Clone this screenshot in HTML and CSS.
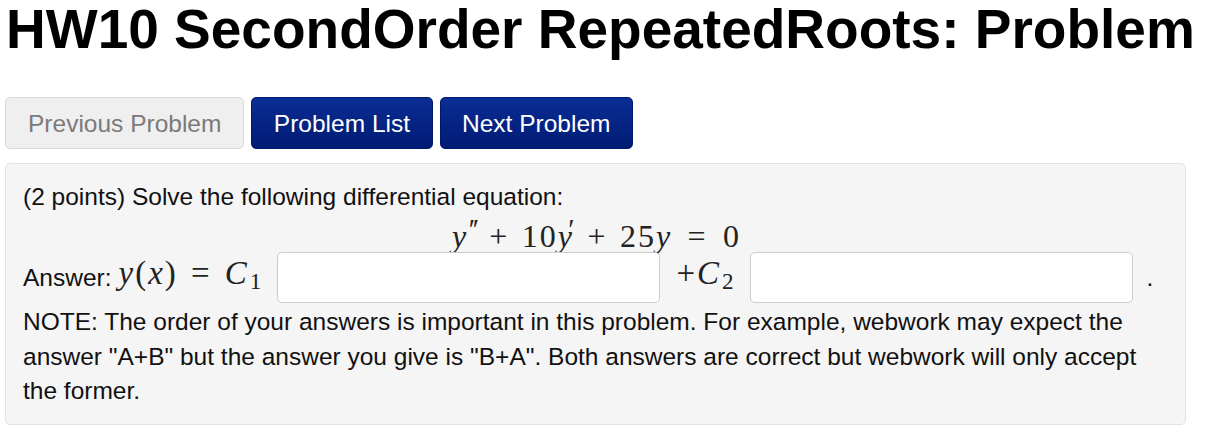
FILE: index.html
```html
<!DOCTYPE html>
<html>
<head>
<meta charset="utf-8">
<link rel="stylesheet" href="styles.css">
</head>
<body>
<div class="page">
  <h1 class="title">HW10 SecondOrder RepeatedRoots: Problem</h1>
  <div class="nav">
    <span class="btn btn-disabled">Previous Problem</span>
    <a class="btn btn-primary">Problem List</a>
    <a class="btn btn-primary">Next Problem</a>
  </div>
  <div class="well">
    <div class="line">(2 points) Solve the following differential equation:</div>
    <div class="eq math"><span class="mi">y</span><span class="pr pr2">′′</span><span class="mo">+</span><span class="mn">10</span><span class="mi">y</span><span class="pr pr1">′</span><span class="mo">+</span><span class="mn">25</span><span class="mi">y</span><span class="mo mo-eq">=</span><span class="mn">0</span></div>
    <div class="answer-row">
      <span class="label">Answer:</span>
      <span class="math ans-math"><span class="mi">y</span><span class="mn">(</span><span class="mi">x</span><span class="mn">)</span><span class="mo mo-eq">=</span><span class="mi">C</span><span class="sub">1</span></span>
      <span class="input"></span>
      <span class="math ans-math2"><span class="mn">+</span><span class="mi">C</span><span class="sub">2</span></span>
      <span class="input"></span>
      <span class="dot">.</span>
    </div>
    <div class="note">NOTE: The order of your answers is important in this problem. For example, webwork may expect the answer "A+B" but the answer you give is "B+A". Both answers are correct but webwork will only accept the former.</div>
  </div>
</div>
</body>
</html>
```

FILE: styles.css
```css
html, body {
  margin: 0;
  padding: 0;
  background: #ffffff;
}

.page {
  padding: 0 20px 0 5px;
  font-family: "Liberation Sans", Arial, sans-serif;
  font-size: 24.5px;
  line-height: 35px;
  color: #111111;
}

.title {
  margin: 0;
  font-size: 55px;
  line-height: 56px;
  font-weight: bold;
  color: #000000;
  padding-left: 1px;
  padding-top: 1px;
  white-space: nowrap;
}

.nav {
  display: flex;
  gap: 7px;
  margin-top: 40px;
}

.btn {
  display: inline-block;
  height: 35px;
  padding: 7.5px 21.5px;
  border: 1px solid transparent;
  border-radius: 5px;
  line-height: 35px;
  white-space: nowrap;
}

.btn-disabled {
  background: #efefef;
  border-color: #d9d9d9;
  color: #7a7a7a;
  padding: 7.5px 22px;
}

.btn-primary {
  background: linear-gradient(to bottom, #0a2e94, #001b74);
  border-color: #00196a;
  color: #ffffff;
}

.well {
  margin-top: 14px;
  background: #f5f5f5;
  border: 1px solid #e3e3e3;
  border-radius: 5px;
  padding: 15px 17px 15px 17px;
}

.line {
  height: 35px;
}

.math {
  font-family: "Liberation Serif", "Times New Roman", serif;
  color: #222222;
  letter-spacing: 2px;
  white-space: nowrap;
}

.eq {
  text-align: center;
  font-size: 32px;
  height: 36px;
  line-height: 30px;
  padding-left: 2px;
}

.mi {
  font-style: italic;
}

.mo {
  margin: 0 0.39em;
}

.mo-eq {
  margin: 0 0.48em;
}

.pr {
  display: inline-block;
  font-size: 0.9em;
  vertical-align: 0.28em;
  letter-spacing: -0.08em;
}

.pr2 {
  margin-left: 0.02em;
}

.pr1 {
  margin-left: -0.2em;
  margin-right: 0.1em;
}

.answer-row {
  display: flex;
  align-items: center;
  height: 55px;
}

.label {
  margin-right: 7px;
}

.ans-math {
  font-size: 33px;
  margin-right: 14px;
}

.ans-math .mo-eq {
  margin: 0 0.4em;
}

.ans-math2 {
  font-size: 33px;
  margin-left: 16px;
  margin-right: 14px;
}

.sub {
  font-size: 0.7em;
  vertical-align: -0.25em;
  margin-left: 1px;
}

.input {
  display: block;
  width: 381px;
  height: 49px;
  background: #ffffff;
  border: 1px solid #cccccc;
  border-radius: 5px;
}

.dot {
  margin-left: 14px;
}

.note {
  line-height: 34.5px;
}
```
